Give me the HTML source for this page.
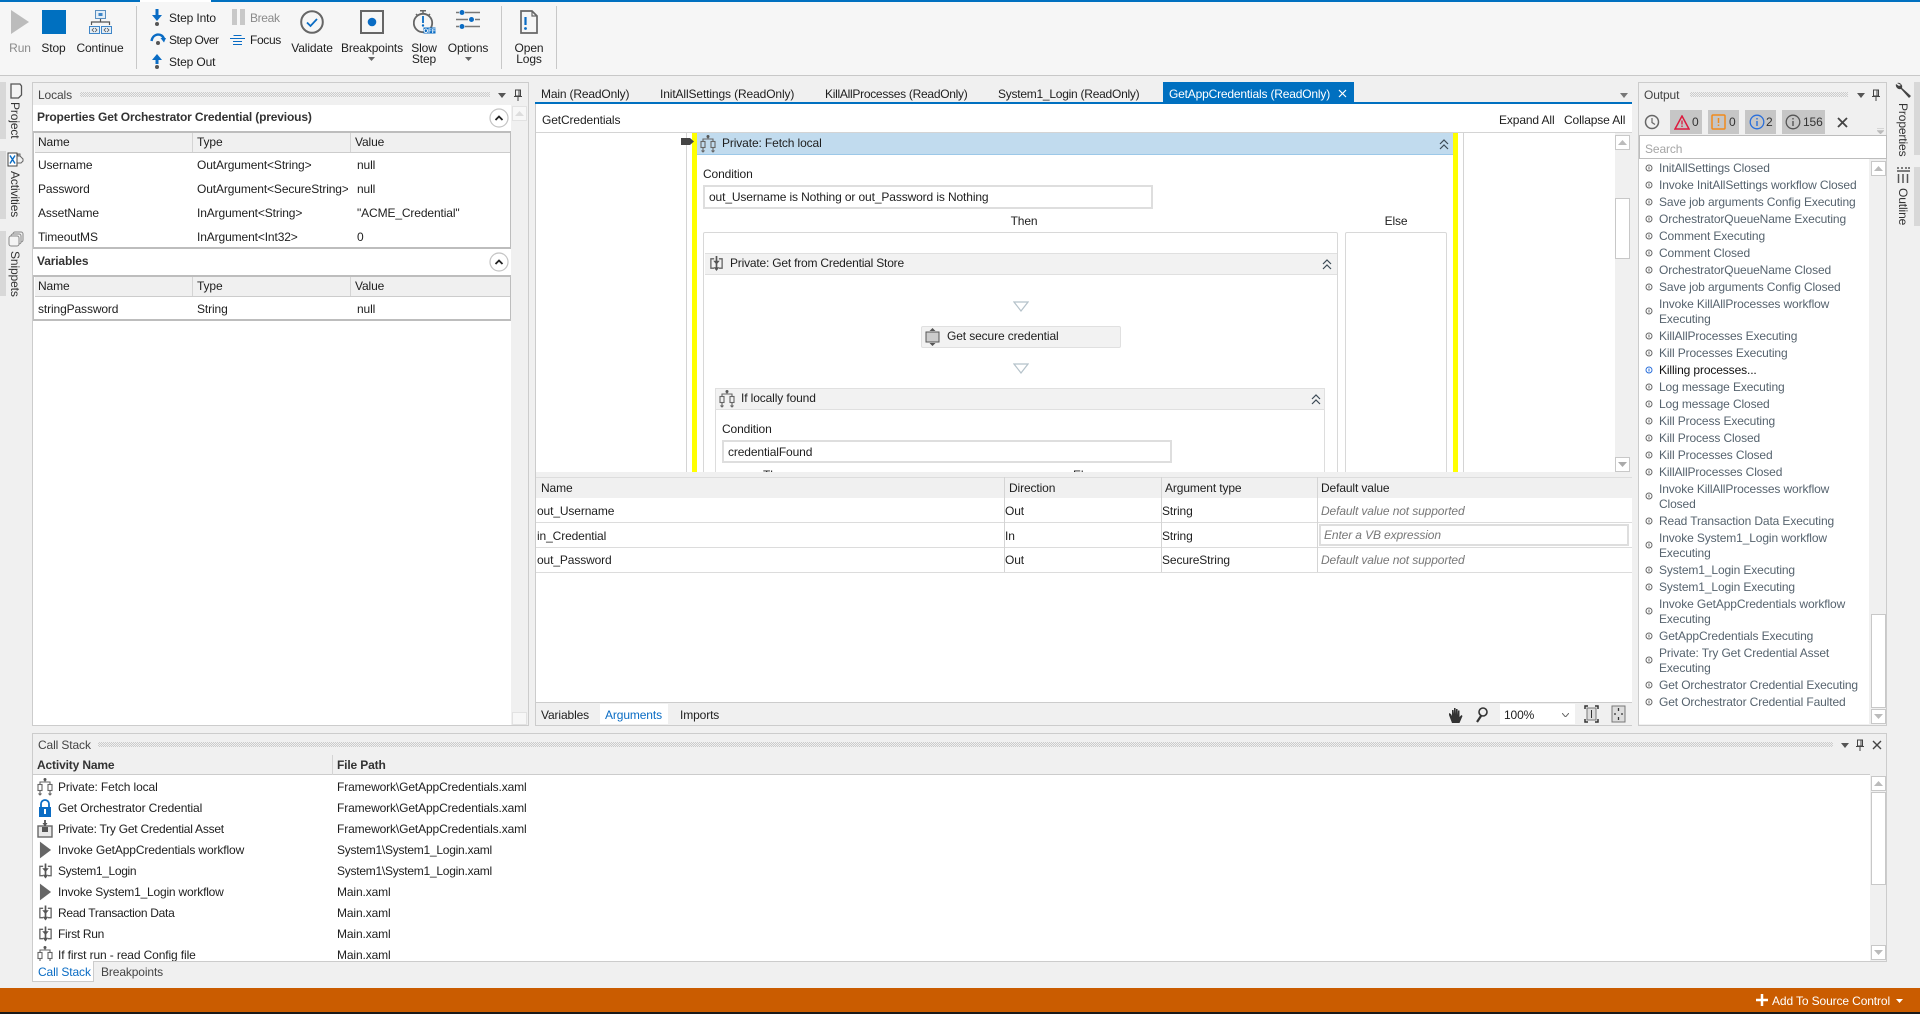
<!DOCTYPE html>
<html lang="en">
<head>
<meta charset="utf-8">
<title>Debug</title>
<style>
html,body{margin:0;padding:0}
body{width:1920px;height:1014px;overflow:hidden;position:relative;background:#f0f0f0;font:12px/16px "Liberation Sans",sans-serif;color:#1e1e1e;letter-spacing:-.12px}
div,span,svg{position:absolute}
span{white-space:nowrap}
.c{transform:translateX(-50%)}
.b{font-weight:bold;color:#333;letter-spacing:-.15px}
.g{background:#f0f0f0}
.w{background:#fff}
.dots{height:5px;background-image:repeating-conic-gradient(#cbcbcb 0 25%,transparent 0 50%);background-size:2px 2px}
.v{writing-mode:vertical-rl;color:#333}
.rail{background:#d8d8d8}
.sb{background:#fff;border:1px solid #c8c8c8;box-sizing:border-box}
.o{color:#56636e;left:1659px}
.tb{border:1px solid #bdbdbd;border-width:2px 1px;box-sizing:border-box;background:#fff}
.vl{width:1px;background:#d4d4d4}
.hl{height:1px;background:#d4d4d4}
.inp{background:#fff;border:2px solid #dedede;box-sizing:border-box}
.h{background:#f2f2f2;border:1px solid #e0e0e0;box-sizing:border-box}
.i{font-style:italic;color:#777}
</style>
</head>
<body>
<svg width="0" height="0" style="left:0;top:0">
<symbol id="if" viewBox="0 0 16 18"><g fill="none" stroke="#666" stroke-width="1.100"><path d="M8 1v3M3 6V4h10v2"/><rect x="1" y="6.500" width="4" height="6"/><rect x="11" y="6.500" width="4" height="6"/><path d="M3 12.500V17M13 12.500V17M1.500 15.500L3 17l1.500-1.500M11.500 15.500L13 17l1.500-1.500"/></g><circle cx="8" cy="1.500" r="1.500" fill="#555"/></symbol>
<symbol id="seq" viewBox="0 0 16 18"><path d="M5.500 4H2v10h3.500M10.500 4H14v10h-3.500" fill="none" stroke="#666" stroke-width="1.400"/><path d="M8 1v15" stroke="#555" stroke-width="1.800"/><path d="M4.500 6h7L8 10zM5 13h6l-3 4z" fill="#555"/></symbol>
<symbol id="inf" viewBox="0 0 8 8"><circle cx="4" cy="4" r="3" fill="none" stroke="#666" stroke-width="1"/><path d="M4 2.500v3" stroke="#666" stroke-width="1"/></symbol>
<symbol id="chev" viewBox="0 0 10 12"><path d="M1 6l4-4 4 4M1 11l4-4 4 4" fill="none" stroke="#3c4a56" stroke-width="1.200"/></symbol>
<symbol id="tri" viewBox="0 0 16 11"><path d="M1 1h14L8 10z" fill="#fff" stroke="#b5c2ca" stroke-width="1.200"/></symbol>
<symbol id="pin" viewBox="0 0 8 12"><path d="M1.500 1h5v6h-5zM0 7.500h8M4 8v4M5 1v6" fill="none" stroke="#444" stroke-width="1"/></symbol>
<symbol id="cir" viewBox="0 0 20 20"><circle cx="10" cy="10" r="9" fill="#fff" stroke="#c4c4c4" stroke-width="1.200"/><path d="M6.500 12L10 8.500l3.500 3.500" fill="none" stroke="#222" stroke-width="1.800"/></symbol>
<symbol id="play" viewBox="0 0 14 18"><path d="M1 0l12 9-12 9z" fill="#666"/></symbol>
</svg>

<!-- top toolbar -->
<div style="left:0;top:0;width:1920px;height:75px;background:#f6f6f6;border-bottom:1px solid #c8c8c8"></div>
<div style="left:0;top:0;width:140px;height:2px;background:#0070c0"></div>
<div style="left:140px;top:0;width:71px;height:2px;background:#fff"></div>
<div style="left:211px;top:0;width:1709px;height:2px;background:#0070c0"></div>

<svg style="left:11px;top:10px" width="18" height="24"><path d="M0 0l18 12L0 24z" fill="#bcbcbc"/></svg>
<span class="c" style="left:20px;top:40px;color:#8a8a8a">Run</span>
<div style="left:42px;top:10px;width:24px;height:24px;background:#0070c0"></div>
<span class="c" style="left:53.500px;top:40px">Stop</span>
<svg style="left:89px;top:10px" width="23" height="24"><g fill="none"><rect x="6.500" y="0.500" width="10" height="8" fill="#e4eef7" stroke="#5a8fc0"/><path d="M11.500 9v3M2.500 15v-3h18v3" stroke="#555" stroke-width="1.200"/><rect x="0.500" y="16.500" width="10" height="7" fill="#e4eef7" stroke="#3f86c8"/><rect x="12.500" y="16.500" width="10" height="7" fill="#e4eef7" stroke="#3f86c8"/><path d="M5 18l-2 2 2 2M6 18l2 2-2 2M17 18l-2 2 2 2M18 18l2 2-2 2" stroke="#555" stroke-width=".8"/></g><rect x="9.500" y="3" width="4" height="3" fill="#3f86c8"/></svg>
<span class="c" style="left:100px;top:40px">Continue</span>
<div style="left:136px;top:6px;width:1px;height:63px;background:#c8c8c8"></div>

<svg style="left:150px;top:8px" width="16" height="62"><path d="M7 1v7" stroke="#0a6cc4" stroke-width="3"/><path d="M2 7h10l-5 6z" fill="#0a6cc4"/><circle cx="7" cy="16" r="2" fill="#555"/><path d="M1.500 33C3 25 12 24.500 14 31" fill="none" stroke="#0a6cc4" stroke-width="2.400"/><path d="M10.500 30h5.500l-2 4.500z" fill="#0a6cc4"/><circle cx="8" cy="35" r="2" fill="#555"/><path d="M7 51v5" stroke="#0a6cc4" stroke-width="3"/><path d="M2 52h10L7 46z" fill="#0a6cc4"/><circle cx="7" cy="59" r="2" fill="#555"/></svg>
<span style="left:169px;top:10px">Step Into</span>
<span style="left:169px;top:32px;letter-spacing:-.5px">Step Over</span>
<span style="left:169px;top:54px">Step Out</span>
<svg style="left:232px;top:9px" width="13" height="17"><rect width="5" height="16" fill="#c8c8c8"/><rect x="8" width="5" height="16" fill="#c8c8c8"/></svg>
<span style="left:250px;top:10px;color:#8a8a8a;letter-spacing:-.35px">Break</span>
<svg style="left:230px;top:35px" width="16" height="10"><path d="M3.500 .5h8M0 3.500h15M3 6.500h9M3 9.500h9" stroke="#0a6cc4" stroke-width="1.100"/></svg>
<span style="left:250px;top:32px;letter-spacing:-.35px">Focus</span>

<svg style="left:300px;top:10px" width="24" height="24"><circle cx="12" cy="12" r="10.800" fill="none" stroke="#666" stroke-width="2"/><path d="M7 12.500l3.500 3.500 6.500-7" fill="none" stroke="#0a6cc4" stroke-width="1.800"/></svg>
<span class="c" style="left:312px;top:40px">Validate</span>
<svg style="left:360px;top:10px" width="24" height="24"><rect x="1" y="1" width="22" height="22" fill="none" stroke="#666" stroke-width="2"/><circle cx="12" cy="12" r="4.300" fill="#0a6cc4"/></svg>
<span class="c" style="left:372px;top:40px">Breakpoints</span>
<svg style="left:368px;top:57px" width="7" height="4"><path d="M0 0h7L3.500 4z" fill="#666"/></svg>
<svg style="left:413px;top:10px" width="23" height="24"><circle cx="10" cy="13" r="9.200" fill="none" stroke="#666" stroke-width="1.800"/><path d="M7 .8h6M10 1v3M3 4l2 2M17 4l-2 2" stroke="#666" stroke-width="1.500"/><path d="M10 6v7" stroke="#0a6cc4" stroke-width="1.800"/><circle cx="10" cy="15.500" r="1.200" fill="#0a6cc4"/><rect x="10.500" y="17.500" width="12" height="6" fill="#0a6cc4"/><text x="16.500" y="23" fill="#fff" font-size="6" font-weight="bold" text-anchor="middle" font-family="Liberation Sans,sans-serif" letter-spacing="0">OFF</text></svg>
<span class="c" style="left:424px;top:40px">Slow</span>
<span class="c" style="left:424px;top:51px">Step</span>
<svg style="left:456px;top:9px" width="24" height="21"><path d="M0 3.500h3M9 3.500h15M0 10.500h12M19 10.500h5M0 17.500h3M9 17.500h15" stroke="#777" stroke-width="1.500"/><circle cx="6" cy="3.500" r="2.500" fill="#0a6cc4"/><circle cx="15.500" cy="10.500" r="2.500" fill="#0a6cc4"/><circle cx="6" cy="17.500" r="2.500" fill="#0a6cc4"/></svg>
<span class="c" style="left:468px;top:40px">Options</span>
<svg style="left:465px;top:57px" width="7" height="4"><path d="M0 0h7L3.500 4z" fill="#666"/></svg>
<div style="left:501px;top:6px;width:1px;height:63px;background:#c8c8c8"></div>
<svg style="left:520px;top:10px" width="18" height="24"><path d="M1 1h11l5 5v17H1z" fill="none" stroke="#666" stroke-width="1.700"/><path d="M12 1v5h5" fill="none" stroke="#666" stroke-width="1.200"/><path d="M5.500 7v8" stroke="#0a6cc4" stroke-width="2.200"/><circle cx="5.500" cy="18.500" r="1.400" fill="#0a6cc4"/></svg>
<span class="c" style="left:529px;top:40px">Open</span>
<span class="c" style="left:529px;top:51px">Logs</span>
<div style="left:556px;top:6px;width:1px;height:63px;background:#c8c8c8"></div>

<!-- left rail -->
<div class="rail" style="left:0;top:82px;width:6px;height:57px"></div>
<div class="rail" style="left:0;top:151px;width:6px;height:68px"></div>
<div class="rail" style="left:0;top:231px;width:6px;height:65px"></div>
<svg style="left:9px;top:83px" width="14" height="16"><path d="M2 1h9l1.500 2v9l-3 3H2z" fill="#f4f4f4" stroke="#555" stroke-width="1.300"/></svg>
<span class="v" style="left:7px;top:102px">Project</span>
<svg style="left:7px;top:152px" width="18" height="15"><rect x="1" y="1" width="9" height="13" fill="#fff" stroke="#444"/><path d="M3 3.500l5 8M8 3.500l-5 8" stroke="#0a6cc4" stroke-width="1.400"/><path d="M10 4h3l3 3v2l-2 2h-4M11 4V2h2v2" fill="none" stroke="#666"/></svg>
<span class="v" style="left:7px;top:171px">Activities</span>
<svg style="left:8px;top:231px" width="16" height="16"><rect x="5" y="1" width="10" height="10" rx="2" fill="#eee" stroke="#888"/><rect x="3" y="3" width="10" height="10" rx="2" fill="#eee" stroke="#888"/><rect x="1" y="5" width="10" height="10" rx="2" fill="#f4f4f4" stroke="#888"/></svg>
<span class="v" style="left:7px;top:251px">Snippets</span>

<!-- Locals panel -->
<div style="left:32px;top:82px;width:497px;height:644px;border:1px solid #ccc;box-sizing:border-box;background:#f0f0f0"></div>
<div class="w" style="left:33px;top:105px;width:478px;height:620px"></div>
<span style="left:38px;top:87px;color:#444">Locals</span>
<div class="dots" style="left:80px;top:92px;width:410px"></div>
<svg style="left:498px;top:93px" width="8" height="5"><path d="M0 0h8L4 5z" fill="#555"/></svg>
<svg style="left:514px;top:89px" width="8" height="12"><use href="#pin"/></svg>
<div class="sb" style="left:512px;top:106px;width:15px;height:15px;background:#f7f7f7;border-color:#e2e2e2"></div>
<svg style="left:515px;top:111px" width="9" height="5"><path d="M0 5h9L4.500 0z" fill="#ddd"/></svg>
<div class="sb" style="left:512px;top:712px;width:15px;height:13px;background:#f7f7f7;border-color:#e2e2e2"></div>

<span class="b" style="left:37px;top:109px">Properties Get Orchestrator Credential (previous)</span>
<svg style="left:489px;top:108px" width="20" height="20"><use href="#cir"/></svg>
<div class="tb" style="left:33px;top:131px;width:478px;height:118px"></div>
<div class="g" style="left:35px;top:133px;width:475px;height:19px;border-bottom:1px solid #ccc"></div>
<div class="vl" style="left:192px;top:133px;height:19px"></div>
<div class="vl" style="left:350px;top:133px;height:19px"></div>
<span style="left:38px;top:134px">Name</span><span style="left:197px;top:134px">Type</span><span style="left:355px;top:134px">Value</span>
<span style="left:38px;top:157px">Username</span><span style="left:197px;top:157px">OutArgument&lt;String&gt;</span><span style="left:357px;top:157px">null</span>
<span style="left:38px;top:181px">Password</span><span style="left:197px;top:181px;width:151px;overflow:hidden">OutArgument&lt;SecureString&gt;</span><span style="left:357px;top:181px">null</span>
<span style="left:38px;top:205px">AssetName</span><span style="left:197px;top:205px">InArgument&lt;String&gt;</span><span style="left:357px;top:205px">"ACME_Credential"</span>
<span style="left:38px;top:229px">TimeoutMS</span><span style="left:197px;top:229px">InArgument&lt;Int32&gt;</span><span style="left:357px;top:229px">0</span>

<span class="b" style="left:37px;top:253px">Variables</span>
<svg style="left:489px;top:252px" width="20" height="20"><use href="#cir"/></svg>
<div class="tb" style="left:33px;top:275px;width:478px;height:46px"></div>
<div class="g" style="left:35px;top:277px;width:475px;height:19px;border-bottom:1px solid #ccc"></div>
<div class="vl" style="left:192px;top:277px;height:19px"></div>
<div class="vl" style="left:350px;top:277px;height:19px"></div>
<span style="left:38px;top:278px">Name</span><span style="left:197px;top:278px">Type</span><span style="left:355px;top:278px">Value</span>
<span style="left:38px;top:301px">stringPassword</span><span style="left:197px;top:301px">String</span><span style="left:357px;top:301px">null</span>

<!-- Tabs -->
<span style="left:541px;top:86px;letter-spacing:-.16px">Main (ReadOnly)</span>
<span style="left:660px;top:86px">InitAllSettings (ReadOnly)</span>
<span style="left:825px;top:86px;letter-spacing:-.28px">KillAllProcesses (ReadOnly)</span>
<span style="left:998px;top:86px;letter-spacing:-.25px">System1_Login (ReadOnly)</span>
<div style="left:1163px;top:82px;width:191px;height:20px;background:#0070c0"></div>
<span style="left:1169px;top:86px;color:#fff;letter-spacing:-.18px">GetAppCredentials (ReadOnly)</span>
<svg style="left:1338px;top:89px" width="9" height="9"><path d="M1 1l7 7M8 1l-7 7" stroke="#fff" stroke-width="1.200"/></svg>
<svg style="left:1620px;top:93px" width="8" height="5"><path d="M0 0h8L4 5z" fill="#777"/></svg>
<div style="left:535px;top:102px;width:1097px;height:2px;background:#0070c0"></div>

<!-- Designer -->
<div class="w" style="left:535px;top:104px;width:1097px;height:622px;border-left:1px solid #ccc;box-sizing:border-box"></div>
<span style="left:542px;top:112px">GetCredentials</span>
<span style="left:1499px;top:112px">Expand All</span>
<span style="left:1564px;top:112px">Collapse All</span>
<div class="hl" style="left:536px;top:132px;width:1096px"></div>

<div style="left:536px;top:133px;width:1079px;height:339px;overflow:hidden;background:#fff">
<div class="vl" style="left:150px;top:0;height:339px"></div>
<div style="left:156px;top:0;width:5px;height:339px;background:#ffff00"></div>
<div style="left:917px;top:0;width:5px;height:339px;background:#ffff00"></div>
<div class="vl" style="left:927px;top:0;height:339px"></div>
<svg style="left:145px;top:4px" width="14" height="9"><path d="M0 1h9l4 3.500-4 3.500H0z" fill="#444"/></svg>
<div style="left:161px;top:0;width:756px;height:22px;background:#c1dbee;border-bottom:1px solid #9cc8e8;box-sizing:border-box"></div>
<svg style="left:164px;top:2px" width="16" height="18"><use href="#if"/></svg>
<span style="left:186px;top:2px">Private: Fetch local</span>
<svg style="left:903px;top:5px" width="10" height="12"><use href="#chev"/></svg>
<span style="left:167px;top:33px">Condition</span>
<div class="inp" style="left:167px;top:52px;width:450px;height:24px"></div>
<span style="left:173px;top:56px">out_Username is Nothing or out_Password is Nothing</span>
<span class="c" style="left:488px;top:80px">Then</span>
<span class="c" style="left:860px;top:80px">Else</span>
<div style="left:167px;top:99px;width:635px;height:260px;border:1px solid #d8d8d8;border-radius:2px;box-sizing:border-box"></div>
<div style="left:809px;top:99px;width:102px;height:260px;border:1px solid #d8d8d8;border-radius:2px;box-sizing:border-box"></div>
<div class="h" style="left:169px;top:120px;width:632px;height:22px;border-width:1px 0"></div>
<svg style="left:173px;top:122px" width="15" height="17"><use href="#seq"/></svg>
<span style="left:194px;top:122px;letter-spacing:-.2px">Private: Get from Credential Store</span>
<svg style="left:786px;top:125px" width="10" height="12"><use href="#chev"/></svg>
<svg style="left:477px;top:168px" width="16" height="11"><use href="#tri"/></svg>
<div class="h" style="left:385px;top:193px;width:200px;height:22px;border-radius:2px"></div>
<svg style="left:389px;top:195px" width="15" height="18"><path d="M7.500 0l3 3h-6zM7.500 18l3-3h-6z" fill="#555"/><rect x="1" y="4" width="13" height="10" fill="#ccc" stroke="#555"/></svg>
<span style="left:411px;top:195px">Get secure credential</span>
<svg style="left:477px;top:230px" width="16" height="11"><use href="#tri"/></svg>
<div style="left:179px;top:255px;width:610px;height:110px;border:1px solid #ddd;box-sizing:border-box"></div>
<div class="h" style="left:179px;top:255px;width:610px;height:22px"></div>
<svg style="left:183px;top:257px" width="16" height="18"><use href="#if"/></svg>
<span style="left:205px;top:257px">If locally found</span>
<svg style="left:775px;top:260px" width="10" height="12"><use href="#chev"/></svg>
<span style="left:186px;top:288px">Condition</span>
<div class="inp" style="left:186px;top:307px;width:450px;height:23px"></div>
<span style="left:192px;top:311px">credentialFound</span>
<span style="left:227px;top:334px">Then</span>
<span style="left:537px;top:334px">Else</span>
</div>

<div class="g" style="left:1615px;top:133px;width:17px;height:339px"></div>
<div class="sb" style="left:1615px;top:135px;width:15px;height:15px"></div>
<svg style="left:1618px;top:140px" width="9" height="5"><path d="M0 5h9L4.500 0z" fill="#bbb"/></svg>
<div class="sb" style="left:1615px;top:198px;width:15px;height:61px"></div>
<div class="sb" style="left:1615px;top:457px;width:15px;height:15px"></div>
<svg style="left:1618px;top:462px" width="9" height="5"><path d="M0 0h9L4.500 5z" fill="#aaa"/></svg>
<div class="g" style="left:536px;top:472px;width:1096px;height:5px"></div>

<!-- Arguments -->
<div class="g" style="left:536px;top:477px;width:1096px;height:21px;border-top:1px solid #ddd;box-sizing:border-box"></div>
<span style="left:541px;top:480px">Name</span><span style="left:1009px;top:480px">Direction</span><span style="left:1165px;top:480px">Argument type</span><span style="left:1321px;top:480px">Default value</span>
<div class="hl" style="left:536px;top:522px;width:1096px;background:#dcdcdc"></div>
<div class="hl" style="left:536px;top:547px;width:1096px;background:#dcdcdc"></div>
<div class="hl" style="left:536px;top:572px;width:1096px;background:#dcdcdc"></div>
<div class="vl" style="left:1004px;top:477px;height:95px"></div>
<div class="vl" style="left:1161px;top:477px;height:95px"></div>
<div class="vl" style="left:1317px;top:477px;height:95px"></div>
<span style="left:537px;top:503px">out_Username</span><span style="left:1005px;top:503px">Out</span><span style="left:1162px;top:503px">String</span><span class="i" style="left:1321px;top:503px">Default value not supported</span>
<span style="left:537px;top:528px">in_Credential</span><span style="left:1005px;top:528px">In</span><span style="left:1162px;top:528px">String</span>
<div class="inp" style="left:1319px;top:524px;width:310px;height:22px"></div>
<span class="i" style="left:1324px;top:527px">Enter a VB expression</span>
<span style="left:537px;top:552px">out_Password</span><span style="left:1005px;top:552px">Out</span><span style="left:1162px;top:552px">SecureString</span><span class="i" style="left:1321px;top:552px">Default value not supported</span>

<div class="g" style="left:536px;top:702px;width:1096px;height:24px;border-top:1px solid #ccc;border-bottom:1px solid #ccc;box-sizing:border-box"></div>
<span style="left:541px;top:707px">Variables</span>
<div class="w" style="left:600px;top:704px;width:68px;height:20px"></div>
<span style="left:605px;top:707px;color:#0a6cc4">Arguments</span>
<span style="left:680px;top:707px">Imports</span>
<svg style="left:1448px;top:707px" width="16" height="17"><path d="M4 16L1 8V6l2 1 1 2V3h1.500l.5 4V1h1.500L8 7V2h1.500L10 8V3.500h1.500V10l2-2 1 1-3 7z" fill="#333"/></svg>
<svg style="left:1475px;top:707px" width="13" height="16"><circle cx="8" cy="5" r="4" fill="none" stroke="#333" stroke-width="1.600"/><path d="M6 9l-4 6" stroke="#333" stroke-width="2.200"/></svg>
<div class="w" style="left:1500px;top:704px;width:75px;height:20px"></div>
<span style="left:1504px;top:707px">100%</span>
<svg style="left:1562px;top:713px" width="7" height="4"><path d="M0 0l3.500 4L7 0" fill="none" stroke="#666"/></svg>
<svg style="left:1584px;top:705px" width="15" height="18"><path d="M1 4V1h3M11 1h3v3M1 14v3h3M11 17h3v-3" fill="none" stroke="#333" stroke-width="1.500"/><rect x="3" y="3" width="9" height="12" fill="#ddd" stroke="#777"/><path d="M7.500 5v8" stroke="#333"/></svg>
<svg style="left:1611px;top:705px" width="15" height="18"><rect x="1" y="1" width="13" height="16" fill="#ddd" stroke="#777"/><path d="M7.500 3v3M7.500 12v3M3 9h2M10 9h2" stroke="#333" stroke-width="1.300"/></svg>

<!-- Output -->
<div style="left:1638px;top:82px;width:249px;height:644px;border:1px solid #ccc;box-sizing:border-box;background:#f0f0f0"></div>
<span style="left:1644px;top:87px;color:#444">Output</span>
<div class="dots" style="left:1690px;top:92px;width:158px"></div>
<svg style="left:1857px;top:93px" width="8" height="5"><path d="M0 0h8L4 5z" fill="#555"/></svg>
<svg style="left:1872px;top:89px" width="8" height="12"><use href="#pin"/></svg>
<svg style="left:1644px;top:114px" width="16" height="16"><circle cx="8" cy="8" r="6.500" fill="none" stroke="#666" stroke-width="1.500"/><path d="M8 4v4.500l3 2" fill="none" stroke="#666" stroke-width="1.200"/></svg>
<div style="left:1670px;top:110px;width:32px;height:24px;background:#c6c6c6"></div>
<svg style="left:1674px;top:115px" width="16" height="15"><path d="M8 1l7 13H1z" fill="none" stroke="#dc1a3e" stroke-width="1.500"/><path d="M8 5.500v4M8 10.500V12" stroke="#dc1a3e" stroke-width="1.300"/></svg>
<span style="left:1692px;top:114px;color:#333">0</span>
<div style="left:1708px;top:110px;width:31px;height:24px;background:#c6c6c6"></div>
<svg style="left:1711px;top:114px" width="15" height="16"><rect x="1" y="1" width="13" height="14" rx="1" fill="none" stroke="#f08a1c" stroke-width="1.500"/><path d="M7.500 4v5M7.500 10.500V12" stroke="#f08a1c" stroke-width="1.500"/></svg>
<span style="left:1729px;top:114px;color:#333">0</span>
<div style="left:1745px;top:110px;width:31px;height:24px;background:#c6c6c6"></div>
<svg style="left:1749px;top:114px" width="16" height="16"><circle cx="8" cy="8" r="6.800" fill="none" stroke="#2a6fdb" stroke-width="1.300"/><path d="M8 7v5M8 4v1.500" stroke="#2a6fdb" stroke-width="1.400"/></svg>
<span style="left:1766px;top:114px;color:#333">2</span>
<div style="left:1782px;top:110px;width:43px;height:24px;background:#c6c6c6"></div>
<svg style="left:1785px;top:114px" width="16" height="16"><circle cx="8" cy="8" r="6.800" fill="none" stroke="#555" stroke-width="1.300"/><path d="M8 7v5M8 4v1.500" stroke="#555" stroke-width="1.400"/></svg>
<span style="left:1803px;top:114px;color:#333">156</span>
<svg style="left:1837px;top:117px" width="11" height="11"><path d="M1 1l9 9M10 1l-9 9" stroke="#444" stroke-width="1.800"/></svg>
<svg style="left:1877px;top:128px" width="7" height="6"><path d="M0 .5h7M0 2.500h7l-3.500 3.500z" fill="#bbb" stroke="#bbb" stroke-width=".6"/></svg>
<div class="w" style="left:1639px;top:135px;width:248px;height:24px;border:1px solid #bdbdbd;box-sizing:border-box"></div>
<span style="left:1645px;top:141px;color:#a5a5a5">Search</span>
<div class="w" style="left:1639px;top:159px;width:230px;height:565px"></div>
<div class="sb" style="left:1871px;top:161px;width:15px;height:15px"></div>
<svg style="left:1874px;top:166px" width="9" height="5"><path d="M0 5h9L4.500 0z" fill="#bbb"/></svg>
<div class="sb" style="left:1871px;top:614px;width:15px;height:94px"></div>
<div class="sb" style="left:1871px;top:709px;width:15px;height:15px"></div>
<svg style="left:1874px;top:714px" width="9" height="5"><path d="M0 0h9L4.500 5z" fill="#bbb"/></svg>

<svg style="left:1645px;top:164px" width="8" height="8"><use href="#inf"/></svg><span class="o" style="top:160px">InitAllSettings Closed</span>
<svg style="left:1645px;top:181px" width="8" height="8"><use href="#inf"/></svg><span class="o" style="top:177px">Invoke InitAllSettings workflow Closed</span>
<svg style="left:1645px;top:198px" width="8" height="8"><use href="#inf"/></svg><span class="o" style="top:194px">Save job arguments Config Executing</span>
<svg style="left:1645px;top:215px" width="8" height="8"><use href="#inf"/></svg><span class="o" style="top:211px">OrchestratorQueueName Executing</span>
<svg style="left:1645px;top:232px" width="8" height="8"><use href="#inf"/></svg><span class="o" style="top:228px">Comment Executing</span>
<svg style="left:1645px;top:249px" width="8" height="8"><use href="#inf"/></svg><span class="o" style="top:245px">Comment Closed</span>
<svg style="left:1645px;top:266px" width="8" height="8"><use href="#inf"/></svg><span class="o" style="top:262px">OrchestratorQueueName Closed</span>
<svg style="left:1645px;top:283px" width="8" height="8"><use href="#inf"/></svg><span class="o" style="top:279px">Save job arguments Config Closed</span>
<svg style="left:1645px;top:307px" width="8" height="8"><use href="#inf"/></svg><span class="o" style="top:296px">Invoke KillAllProcesses workflow</span><span class="o" style="top:311px">Executing</span>
<svg style="left:1645px;top:332px" width="8" height="8"><use href="#inf"/></svg><span class="o" style="top:328px">KillAllProcesses Executing</span>
<svg style="left:1645px;top:349px" width="8" height="8"><use href="#inf"/></svg><span class="o" style="top:345px">Kill Processes Executing</span>
<svg style="left:1645px;top:366px" width="8" height="8"><circle cx="4" cy="4" r="3" fill="none" stroke="#2a6fdb"/><path d="M4 2.500v3" stroke="#2a6fdb"/></svg><span class="o" style="top:362px;color:#111">Killing processes...</span>
<svg style="left:1645px;top:383px" width="8" height="8"><use href="#inf"/></svg><span class="o" style="top:379px">Log message Executing</span>
<svg style="left:1645px;top:400px" width="8" height="8"><use href="#inf"/></svg><span class="o" style="top:396px">Log message Closed</span>
<svg style="left:1645px;top:417px" width="8" height="8"><use href="#inf"/></svg><span class="o" style="top:413px">Kill Process Executing</span>
<svg style="left:1645px;top:434px" width="8" height="8"><use href="#inf"/></svg><span class="o" style="top:430px">Kill Process Closed</span>
<svg style="left:1645px;top:451px" width="8" height="8"><use href="#inf"/></svg><span class="o" style="top:447px">Kill Processes Closed</span>
<svg style="left:1645px;top:468px" width="8" height="8"><use href="#inf"/></svg><span class="o" style="top:464px">KillAllProcesses Closed</span>
<svg style="left:1645px;top:492px" width="8" height="8"><use href="#inf"/></svg><span class="o" style="top:481px">Invoke KillAllProcesses workflow</span><span class="o" style="top:496px">Closed</span>
<svg style="left:1645px;top:517px" width="8" height="8"><use href="#inf"/></svg><span class="o" style="top:513px">Read Transaction Data Executing</span>
<svg style="left:1645px;top:541px" width="8" height="8"><use href="#inf"/></svg><span class="o" style="top:530px">Invoke System1_Login workflow</span><span class="o" style="top:545px">Executing</span>
<svg style="left:1645px;top:566px" width="8" height="8"><use href="#inf"/></svg><span class="o" style="top:562px">System1_Login Executing</span>
<svg style="left:1645px;top:583px" width="8" height="8"><use href="#inf"/></svg><span class="o" style="top:579px">System1_Login Executing</span>
<svg style="left:1645px;top:607px" width="8" height="8"><use href="#inf"/></svg><span class="o" style="top:596px">Invoke GetAppCredentials workflow</span><span class="o" style="top:611px">Executing</span>
<svg style="left:1645px;top:632px" width="8" height="8"><use href="#inf"/></svg><span class="o" style="top:628px">GetAppCredentials Executing</span>
<svg style="left:1645px;top:656px" width="8" height="8"><use href="#inf"/></svg><span class="o" style="top:645px">Private: Try Get Credential Asset</span><span class="o" style="top:660px">Executing</span>
<svg style="left:1645px;top:681px" width="8" height="8"><use href="#inf"/></svg><span class="o" style="top:677px">Get Orchestrator Credential Executing</span>
<svg style="left:1645px;top:698px" width="8" height="8"><use href="#inf"/></svg><span class="o" style="top:694px">Get Orchestrator Credential Faulted</span>

<!-- right rail -->
<div class="rail" style="left:1914px;top:82px;width:6px;height:73px"></div>
<div class="rail" style="left:1914px;top:167px;width:6px;height:59px"></div>
<svg style="left:1895px;top:82px" width="17" height="17"><path d="M2 1a4 4 0 0 1 5 5l9 8-2 2-8-9a4 4 0 0 1-5-5l3 2 2-1z" fill="#444"/></svg>
<span class="v" style="left:1895px;top:103px">Properties</span>
<svg style="left:1896px;top:167px" width="14" height="17"><path d="M1 1h2M5 1h2M9 1h2M12 1h2M1 4h13M2.500 7v9M7 7v9M11.500 7v9" stroke="#555" stroke-width="1.500"/></svg>
<span class="v" style="left:1895px;top:188px">Outline</span>

<!-- Call Stack -->
<div style="left:32px;top:733px;width:1855px;height:229px;border:1px solid #ccc;box-sizing:border-box;background:#f0f0f0"></div>
<span style="left:38px;top:737px;color:#444">Call Stack</span>
<div class="dots" style="left:98px;top:742px;width:1735px"></div>
<svg style="left:1841px;top:743px" width="8" height="5"><path d="M0 0h8L4 5z" fill="#555"/></svg>
<svg style="left:1856px;top:739px" width="8" height="12"><use href="#pin"/></svg>
<svg style="left:1872px;top:740px" width="10" height="10"><path d="M1 1l8 8M9 1l-8 8" stroke="#444" stroke-width="1.400"/></svg>
<div style="left:33px;top:755px;width:1837px;height:20px;background:#f0f0f0;border-bottom:1px solid #ccc;box-sizing:border-box"></div>
<div class="vl" style="left:332px;top:755px;height:20px"></div>
<span class="b" style="left:37px;top:757px">Activity Name</span>
<span class="b" style="left:337px;top:757px">File Path</span>
<div class="w" style="left:33px;top:775px;width:1837px;height:186px;overflow:hidden"></div>
<div class="sb" style="left:1871px;top:776px;width:15px;height:15px"></div>
<svg style="left:1874px;top:781px" width="9" height="5"><path d="M0 5h9L4.500 0z" fill="#bbb"/></svg>
<div class="sb" style="left:1871px;top:792px;width:15px;height:93px"></div>
<div class="sb" style="left:1871px;top:945px;width:15px;height:15px"></div>
<svg style="left:1874px;top:950px" width="9" height="5"><path d="M0 0h9L4.500 5z" fill="#bbb"/></svg>

<svg style="left:37px;top:778px" width="16" height="18"><use href="#if"/></svg>
<span style="left:58px;top:779px">Private: Fetch local</span><span style="left:337px;top:779px">Framework\GetAppCredentials.xaml</span>
<svg style="left:38px;top:799px" width="14" height="18"><path d="M3 8V5a4 4 0 0 1 8 0v3" fill="none" stroke="#0a6cc4" stroke-width="1.800"/><rect x="1" y="8" width="12" height="10" fill="#0a6cc4"/><rect x="6" y="10" width="2" height="5" fill="#fff"/></svg>
<span style="left:58px;top:800px">Get Orchestrator Credential</span><span style="left:337px;top:800px">Framework\GetAppCredentials.xaml</span>
<svg style="left:37px;top:820px" width="16" height="18"><rect x="1" y="6" width="14" height="11" fill="#e8e8e8" stroke="#666" stroke-width="1.400"/><rect x="5" y="7" width="6" height="5" fill="#555"/><path d="M8 0v6" stroke="#555" stroke-width="1.800"/><path d="M5.500 3h5L8 6.500z" fill="#555"/></svg>
<span style="left:58px;top:821px;letter-spacing:-.25px">Private: Try Get Credential Asset</span><span style="left:337px;top:821px">Framework\GetAppCredentials.xaml</span>
<svg style="left:39px;top:841px" width="13" height="18"><use href="#play"/></svg>
<span style="left:58px;top:842px">Invoke GetAppCredentials workflow</span><span style="left:337px;top:842px;letter-spacing:-.25px">System1\System1_Login.xaml</span>
<svg style="left:38px;top:862px" width="15" height="18"><use href="#seq"/></svg>
<span style="left:58px;top:863px;letter-spacing:-.35px">System1_Login</span><span style="left:337px;top:863px;letter-spacing:-.25px">System1\System1_Login.xaml</span>
<svg style="left:39px;top:883px" width="13" height="18"><use href="#play"/></svg>
<span style="left:58px;top:884px;letter-spacing:-.2px">Invoke System1_Login workflow</span><span style="left:337px;top:884px">Main.xaml</span>
<svg style="left:38px;top:904px" width="15" height="18"><use href="#seq"/></svg>
<span style="left:58px;top:905px;letter-spacing:-.3px">Read Transaction Data</span><span style="left:337px;top:905px">Main.xaml</span>
<svg style="left:38px;top:925px" width="15" height="18"><use href="#seq"/></svg>
<span style="left:58px;top:926px;letter-spacing:-.3px">First Run</span><span style="left:337px;top:926px">Main.xaml</span>
<svg style="left:37px;top:946px" width="16" height="15"><use href="#if" width="16" height="18"/></svg>
<span style="left:58px;top:947px;height:14px;overflow:hidden">If first run - read Config file</span><span style="left:337px;top:947px;height:14px;overflow:hidden">Main.xaml</span>

<div style="left:32px;top:961px;width:62px;height:21px;background:#fff;border:1px solid #ccc;border-top:0;box-sizing:border-box"></div>
<span style="left:38px;top:964px;color:#0a6cc4">Call Stack</span>
<span style="left:101px;top:964px;color:#444">Breakpoints</span>

<!-- status bar -->
<div style="left:0;top:988px;width:1920px;height:24px;background:#ca5c00"></div>
<div style="left:0;top:1012px;width:1920px;height:2px;background:#1a1a1a"></div>
<svg style="left:1756px;top:994px" width="12" height="12"><path d="M6 0v12M0 6h12" stroke="#fff" stroke-width="2.500"/></svg>
<span style="left:1772px;top:993px;color:#fff">Add To Source Control</span>
<svg style="left:1896px;top:999px" width="7" height="4"><path d="M0 0h7L3.500 4z" fill="#fff"/></svg>
</body>
</html>
